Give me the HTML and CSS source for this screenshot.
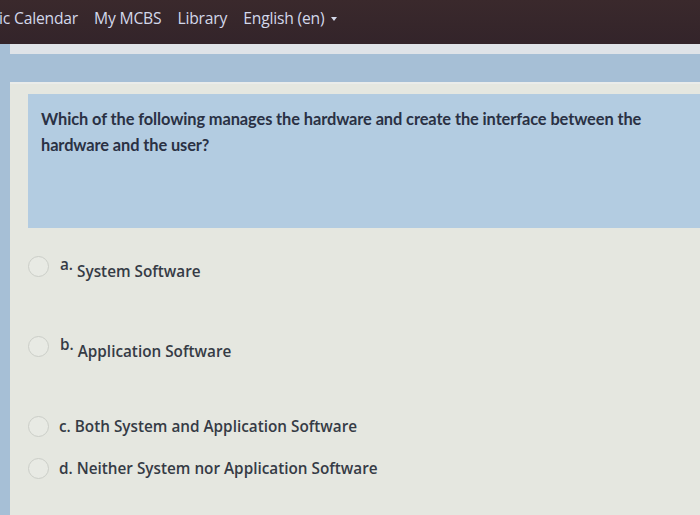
FILE: index.html
```html
<!DOCTYPE html>
<html lang="en">
<head>
<meta charset="utf-8">
<title>Quiz</title>
<link rel="stylesheet" href="styles.css">
</head>
<body>
<header class="navbar">
  <nav class="nav">
    <a class="nav-item cut">ic Calendar</a>
    <a class="nav-item">My MCBS</a>
    <a class="nav-item">Library</a>
    <a class="nav-item lang">English (en) <span class="caret"></span></a>
  </nav>
</header>
<div class="page">
  <div class="stripe"></div>
  <div class="gap"></div>
  <section class="card">
    <div class="qbox">
      <p class="qtext">Which of the following manages the hardware and create the interface between the hardware and the user?</p>
    </div>
    <div class="answers">
      <div class="opt split">
        <span class="radio"></span>
        <span class="ans"><span class="lbl">a.</span> <span class="txt">System Software</span></span>
      </div>
      <div class="opt split">
        <span class="radio"></span>
        <span class="ans"><span class="lbl">b.</span> <span class="txt">Application Software</span></span>
      </div>
      <div class="opt">
        <span class="radio"></span>
        <span class="ans inline">c. Both System and Application Software</span>
      </div>
      <div class="opt">
        <span class="radio"></span>
        <span class="ans inline">d. Neither System nor Application Software</span>
      </div>
    </div>
  </section>
</div>
</body>
</html>
```
FILE: styles.css
```css
html, body {
  margin: 0;
  padding: 0;
}
body {
  width: 700px;
  height: 515px;
  overflow: hidden;
  background: #a6bfd6;
  font-family: "Open Sans", "Liberation Sans", sans-serif;
}
.navbar {
  height: 44px;
  background: linear-gradient(180deg, #3a292c 0%, #33242a 100%);
  display: flex;
  align-items: flex-start;
}
.nav {
  display: flex;
  gap: 16px;
  padding-top: 7px;
  margin-left: -1px;
}
.nav-item {
  color: #d3d8ea;
  font-size: 15.7px;
  line-height: 22px;
  letter-spacing: -0.2px;
}
.lang {
  display: flex;
  align-items: center;
  gap: 7px;
}
.caret {
  width: 0;
  height: 0;
  border-left: 3.5px solid transparent;
  border-right: 3.5px solid transparent;
  border-top: 4px solid #d3d8ea;
  margin-top: 1px;
}
.page {
  padding-left: 10px;
}
.stripe {
  height: 10px;
  background: #dfe3e8;
}
.gap {
  height: 28px;
}
.card {
  background: #e5e7e0;
  border-top: 2px solid #eaecea;
  padding: 10px 0 0 18px;
  height: 440px;
  box-sizing: border-box;
}
.qbox {
  background: #b3cce1;
  height: 134px;
  box-sizing: border-box;
  padding: 12px 45px 0 13px;
}
.qtext {
  margin: 0;
  font-family: "Lato", "Open Sans", sans-serif;
  font-weight: 700;
  font-size: 16.4px;
  line-height: 26px;
  color: #2a3144;
  letter-spacing: -0.1px;
}
.answers {
  display: flex;
  flex-direction: column;
  gap: 18px;
  padding-top: 26px;
  margin-left: 0;
}
.opt {
  display: flex;
  align-items: center;
  height: 24px;
  color: #353b45;
  font-weight: 600;
  font-size: 15.3px;
}
.opt.split {
  margin-bottom: 38px;
}
.radio {
  width: 19px;
  height: 19px;
  border-radius: 50%;
  border: 1.5px solid #cbcec8;
  background: #e8eae4;
  flex: none;
  margin-right: 10px;
}
.ans {
  white-space: nowrap;
}
.lbl {
  position: relative;
  top: -2px;
  margin-left: 1px;
}
.txt {
  position: relative;
  top: 5px;
  margin-left: 0;
}
.inline {
  margin-left: 0;
}
```
